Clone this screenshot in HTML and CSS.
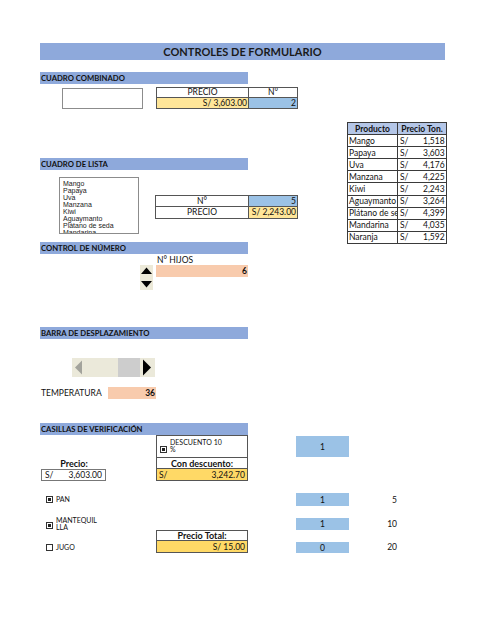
FILE: index.html
```html
<!DOCTYPE html>
<html lang="es">
<head>
<meta charset="utf-8">
<title>Controles de formulario</title>
<link rel="stylesheet" href="styles.css">
</head>
<body>
<div class="page">
  <div class="title">CONTROLES DE FORMULARIO</div>

  <div class="top">
    <div class="main">
      <div class="hdr">CUADRO COMBINADO</div>
      <div class="combo-row">
        <div class="combo"></div>
        <div class="mini t1">
          <div class="c w92 white ac h10">PRECIO</div>
          <div class="c w49 white ac h10">N°</div>
          <div class="c w92 yellow ar h11">S/ 3,603.00</div>
          <div class="c w49 blue ar h11">2</div>
        </div>
      </div>

      <div class="hdr mt49">CUADRO DE LISTA</div>
      <div class="list-row">
        <div class="listbox">
          <div>Mango</div><div>Papaya</div><div>Uva</div><div>Manzana</div><div>Kiwi</div><div>Aguaymanto</div><div>Plátano de seda</div><div>Mandarina</div><div>Naranja</div>
        </div>
        <div class="mini t2">
          <div class="c w93 white ac h11">N°</div>
          <div class="c w49 blue ar h11">5</div>
          <div class="c w93 white ac h12">PRECIO</div>
          <div class="c w49 yellow ar h12">S/ 2,243.00</div>
        </div>
      </div>

      <div class="hdr mt8">CONTROL DE NÚMERO</div>
    </div>

    <div class="side">
      <table class="prod">
        <tr><th>Producto</th><th colspan="2">Precio Ton.</th></tr>
        <tr><td class="name">Mango</td><td class="cur">S/</td><td class="val">1,518</td></tr>
        <tr><td class="name">Papaya</td><td class="cur">S/</td><td class="val">3,603</td></tr>
        <tr><td class="name">Uva</td><td class="cur">S/</td><td class="val">4,176</td></tr>
        <tr><td class="name">Manzana</td><td class="cur">S/</td><td class="val">4,225</td></tr>
        <tr><td class="name">Kiwi</td><td class="cur">S/</td><td class="val">2,243</td></tr>
        <tr><td class="name">Aguaymanto</td><td class="cur">S/</td><td class="val">3,264</td></tr>
        <tr><td class="name">Plátano de seda</td><td class="cur">S/</td><td class="val">4,399</td></tr>
        <tr><td class="name">Mandarina</td><td class="cur">S/</td><td class="val">4,035</td></tr>
        <tr><td class="name">Naranja</td><td class="cur">S/</td><td class="val">1,592</td></tr>
      </table>
    </div>
  </div>

  <div class="hijos-label">N° HIJOS</div>
  <div class="num-row">
    <div class="spinner">
      <svg width="13" height="25" viewBox="0 0 13 25"><path d="M6.5 2.5 L12 9 L1 9 Z" fill="#000"/><path d="M1 16 L12 16 L6.5 22.5 Z" fill="#000"/></svg>
    </div>
    <div class="c peach ar bold w92 h12">6</div>
  </div>

  <div class="hdr mt37">BARRA DE DESPLAZAMIENTO</div>
  <div class="scroll">
    <div class="arrow">
      <svg width="12" height="19" viewBox="0 0 12 19"><path d="M10 2.5 L3 9.5 L10 16.5 Z" fill="#a3a39c"/></svg>
    </div>
    <div class="track"></div>
    <div class="thumb"></div>
    <div class="arrow">
      <svg width="14" height="19" viewBox="0 0 14 19"><path d="M3 1.5 L11 9.5 L3 17.5 Z" fill="#000"/></svg>
    </div>
  </div>
  <div class="temp-row">
    <div class="temp-label">TEMPERATURA</div>
    <div class="c peach ar bold w48 h12">36</div>
  </div>

  <div class="hdr mt24">CASILLAS DE VERIFICACIÓN</div>
  <div class="checks">
    <div class="g-desc boxed">
      <span class="cb on"></span><span class="cb-text">DESCUENTO 10<br>%</span>
    </div>
    <div class="g-blue1 blue cell-c">1</div>
    <div class="g-plabel bold cell-c">Precio:</div>
    <div class="g-dlabel boxed bold cell-c">Con descuento:</div>
    <div class="g-price boxed split"><span>S/</span><span>3,603.00</span></div>
    <div class="g-dval boxed2 yellow2 split"><span>S/</span><span>3,242.70</span></div>

    <div class="g-pan chk"><span class="cb on"></span><span class="cb-text">PAN</span></div>
    <div class="g-b2 blue cell-c">1</div>
    <div class="g-n2 cell-r">5</div>

    <div class="g-man chk"><span class="cb on"></span><span class="cb-text">MANTEQUIL<br>LLA</span></div>
    <div class="g-b3 blue cell-c">1</div>
    <div class="g-n3 cell-r">10</div>

    <div class="g-tlabel boxed bold cell-c">Precio Total:</div>
    <div class="g-tval boxed2 yellow2 cell-r">S/ 15.00</div>

    <div class="g-jugo chk"><span class="cb"></span><span class="cb-text">JUGO</span></div>
    <div class="g-b4 blue cell-c">0</div>
    <div class="g-n4 cell-r">20</div>
  </div>
</div>
</body>
</html>
```

FILE: styles.css
```css
* { box-sizing: border-box; }
html, body { margin: 0; padding: 0; background: #fff; }
body {
  font-family: Lato, "Open Sans", "Liberation Sans", sans-serif;
  font-size: 8.5px;
  color: #111;
  width: 494px;
  height: 640px;
  overflow: hidden;
}
.page { padding: 43px 0 0 40px; }

.title {
  width: 405px;
  height: 17px;
  line-height: 17px;
  background: #8ea9db;
  text-align: center;
  font-weight: 700;
  font-size: 11px;
  color: #1a1a1a;
}

.hdr {
  width: 208px;
  height: 12px;
  line-height: 12px;
  background: #8ea9db;
  font-weight: 700;
  font-size: 7.7px;
  padding-left: 1px;
}
.mt8 { margin-top: 8px; }
.mt24 { margin-top: 24px; }
.mt37 { margin-top: 37px; }
.mt49 { margin-top: 49px; }

.top { display: flex; margin-top: 12px; }
.main { width: 258px; flex: none; }
.side { margin-left: 49px; margin-top: 50px; width: 100px; flex: none; }

.combo-row { display: flex; margin-top: 3px; height: 22px; }
.combo {
  flex: none;
  margin-left: 22px;
  margin-top: 1px;
  width: 81px;
  height: 21px;
  border: 1px solid #8c8c8c;
  background: #fff;
}

.mini {
  flex: none;
  display: flex;
  flex-wrap: wrap;
  align-content: flex-start;
  border-top: 1px solid #555;
  border-left: 1px solid #555;
}
.mini .c { flex: none; border-right: 1px solid #555; border-bottom: 1px solid #555; }
.t1 { margin-left: 13px; width: 142px; height: 22px; }
.t2 { margin-left: 16px; margin-top: 25px; width: 143px; height: 24px; }

.c { line-height: 1; display: flex; align-items: center; padding: 0 1px; overflow: hidden; white-space: nowrap; }
.c.ac { justify-content: center; }
.c.ar { justify-content: flex-end; }
.w48 { width: 48px; }
.w49 { width: 49px; }
.w92 { width: 92px; }
.w93 { width: 93px; }
.h10 { height: 10px; }
.h11 { height: 11px; }
.h12 { height: 12px; }
.white { background: #fff; }
.yellow { background: #ffe699; }
.yellow2 { background: #ffd966; }
.blue { background: #9bc2e6; }
.peach { background: #f8cbad; }
.bold { font-weight: 700; }

.list-row { display: flex; height: 64px; }
.listbox {
  flex: none;
  margin-left: 19px;
  margin-top: 7px;
  width: 80px;
  height: 57px;
  border: 1px solid #8c8c8c;
  padding: 2px 0 0 3px;
  font-family: "Liberation Sans", Arial, sans-serif;
  font-size: 7px;
  line-height: 7px;
  overflow: hidden;
  color: #222;
}

.prod {
  border-collapse: collapse;
  width: 100px;
  table-layout: fixed;
  font-size: 8.5px;
}
.prod th, .prod td {
  border: 1px solid #3a3a3a;
  height: 12.1px;
  padding: 0 1px;
  line-height: 10px;
  white-space: nowrap;
  overflow: hidden;
  text-align: left;
}
.prod th { background: #b4c6e7; font-weight: 700; text-align: center; }
.prod th:first-child, .prod td.name { width: 50px; }
.prod td.cur { width: 17px; border-right: none; padding-left: 2px; }
.prod td.val { text-align: right; border-left: none; padding-right: 2px; }

.hijos-label {
  margin-left: 117px;
  height: 11px;
  line-height: 13px;
}
.num-row { display: flex; height: 25px; }
.spinner {
  margin-left: 100px;
  width: 13px;
  height: 25px;
  background: #ece9d8;
}
.num-row .c { margin-left: 3px; }

.scroll {
  display: flex;
  margin-top: 19px;
  margin-left: 32px;
  width: 83px;
  height: 19px;
  background: #ebe9da;
}
.scroll .arrow { height: 19px; display: flex; }
.scroll .track { width: 34px; }
.scroll .thumb { width: 22px; background: #cdcdcd; }

.temp-row { display: flex; margin-top: 10px; height: 12px; }
.temp-label { width: 68px; padding-left: 1px; line-height: 12px; }

.checks {
  display: grid;
  grid-template-columns: 66px 50px 92px 48px 53px 48px;
  grid-template-rows: 22px 12px 12px 12px 13px 12px 12px 11px 12px;
}
.cell-c { display: flex; align-items: center; justify-content: center; }
.cell-r { display: flex; align-items: center; justify-content: flex-end; }
.boxed { border: 1px solid #555; display: flex; align-items: center; background: #fff; }
.boxed2 { border: 1px solid #555; border-top: none; display: flex; align-items: center; padding: 0 2px; }
.split { justify-content: space-between; }

.g-desc { grid-row: 1; grid-column: 3; padding-left: 3px; border-bottom: none; }
.g-blue1 { grid-row: 1; grid-column: 5; margin-top: 1px; }
.g-plabel { grid-row: 2; grid-column: 1; padding-left: 2px; font-size: 9px; }
.g-dlabel { grid-row: 2; grid-column: 3; font-size: 9px; }
.g-price { grid-row: 3; grid-column: 1; margin-left: 1px; padding: 0 3px; border-color: #777; }
.g-dval { grid-row: 3; grid-column: 3; }

.chk { display: flex; align-items: center; padding-left: 6px; grid-column: 1 / span 2; }
.g-pan { grid-row: 5; }
.g-man { grid-row: 7; }
.g-jugo { grid-row: 9; margin-top: 1px; }

.g-b2 { grid-row: 5; grid-column: 5; }
.g-b3 { grid-row: 7; grid-column: 5; }
.g-b4 { grid-row: 9; grid-column: 5; margin-top: 1px; }
.g-n2, .g-n3, .g-n4 { grid-column: 6; }
.g-n2 { grid-row: 5; }
.g-n3 { grid-row: 7; }
.g-n4 { grid-row: 9; }

.g-tlabel { grid-row: 8; grid-column: 3; font-size: 9px; }
.g-tval { grid-row: 9; grid-column: 3; }

.cb {
  flex: none;
  width: 7px;
  height: 7px;
  border: 1px solid #333;
  background: #fff;
  position: relative;
  margin-right: 3px;
}
.cb.on::after {
  content: "";
  position: absolute;
  left: 1px; top: 1px;
  width: 3px; height: 3px;
  background: #222;
}
.cb-text { font-size: 7px; line-height: 7px; }
.g-desc .cb { margin-top: 6px; }
.g-desc .cb-text { margin-top: -1px; }
.g-man .cb { margin-top: 3px; }
```
